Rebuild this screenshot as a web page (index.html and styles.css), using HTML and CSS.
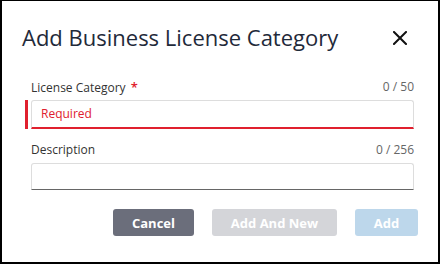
FILE: index.html
```html
<!DOCTYPE html>
<html>
<head>
<meta charset="utf-8">
<link rel="stylesheet" href="styles.css">
</head>
<body>
<div class="dialog">
  <div class="header">
    <h1 class="title">Add Business License Category</h1>
    <button class="close" aria-label="Close">
      <svg width="14" height="14" viewBox="0 0 14 14"><path d="M1 1L13 13M13 1L1 13" stroke="#111" stroke-width="2" stroke-linecap="square"/></svg>
    </button>
  </div>
  <div class="field field-error">
    <div class="label-row">
      <span class="label">License Category <span class="star">*</span></span>
      <span class="count">0 / 50</span>
    </div>
    <div class="input-wrap">
      <div class="input input-invalid">Required</div>
    </div>
  </div>
  <div class="field field-desc">
    <div class="label-row">
      <span class="label">Description</span>
      <span class="count">0 / 256</span>
    </div>
    <div class="input-wrap">
      <div class="input input-plain"></div>
    </div>
  </div>
  <div class="actions">
    <button class="btn btn-cancel">Cancel</button>
    <button class="btn btn-new">Add And New</button>
    <button class="btn btn-add">Add</button>
  </div>
</div>
</body>
</html>
```

FILE: styles.css
```css
* { box-sizing: border-box; }
html, body { margin: 0; padding: 0; background: #fff; }
body { font-family: "Open Sans", "Noto Sans", sans-serif; }

.dialog {
  width: 440px;
  height: 264px;
  border-style: solid;
  border-color: #000;
  border-width: 1px 2px 2px 2px;
  background: #fff;
  padding: 21px 0 0 0;
}

.header {
  display: flex;
  align-items: center;
  justify-content: space-between;
  padding: 0 31px 0 20px;
  height: 30px;
}
.title {
  margin: 0;
  font-weight: 400;
  font-size: 22px;
  line-height: 30px;
  color: #1f2a3a;
}
.close {
  border: 0;
  background: none;
  padding: 0;
  width: 14px;
  height: 14px;
  display: block;
  margin-top: 2px;
}
.close svg { display: block; }

.field { padding: 0 24px 0 29px; }
.field-error { margin-top: 27px; }
.field-desc { margin-top: 13px; }

.label-row {
  display: flex;
  justify-content: space-between;
  font-size: 12px;
  line-height: 16px;
  height: 16px;
}
.label { color: #333; }
.star { color: #e0202e; margin-left: 2px; font-size: 13px; font-weight: 600; }
.count { color: #666; }

.input-wrap { position: relative; margin-top: 5px; }
.input {
  border: 1px solid #ddd;
  border-radius: 3px 3px 0 0;
  font-size: 12px;
  line-height: 16px;
  padding: 0 9px;
}
.input-invalid {
  height: 29px;
  padding-top: 5px;
  border-bottom: 2px solid #e0202e;
  color: #e0202e;
}
.field-error .input-wrap::before {
  content: "";
  position: absolute;
  left: -6px;
  top: 0;
  width: 3px;
  height: 29px;
  background: #e0202e;
}
.input-plain {
  height: 27px;
  border-bottom: 1px solid #666;
}

.actions {
  display: flex;
  justify-content: flex-end;
  gap: 18px;
  padding-right: 20px;
  margin-top: 19px;
}
.btn {
  height: 27px;
  border: 0;
  border-radius: 3px;
  padding: 0 18px;
  font-family: "Open Sans", "Noto Sans", sans-serif;
  font-weight: 700;
  font-size: 13px;
  color: #fff;
}
.btn-cancel { background: #6b6e7b; width: 81px; }
.btn-new { background: #d4d5d9; width: 125px; }
.btn-add { background: #bdd7eb; width: 63px; }
```
